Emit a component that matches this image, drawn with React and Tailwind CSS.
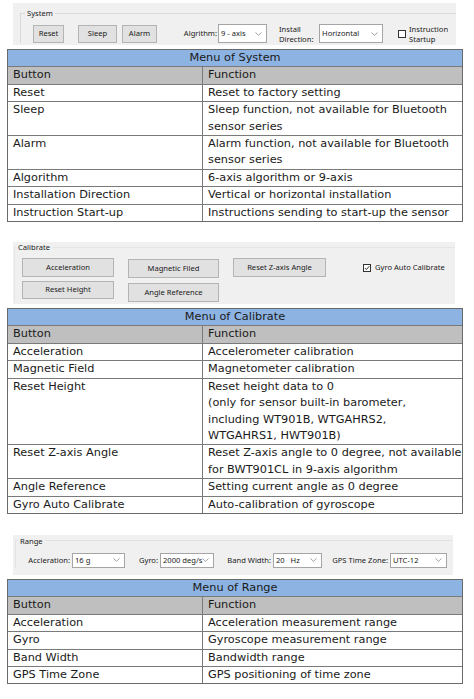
import React from 'react'

const ui = "font-['Noto_Sans','Open_Sans',sans-serif] text-[7.6px] text-[#1a1a1a] whitespace-nowrap"

function WinButton({ children, className }) {
  return (
    <div className={`flex items-center justify-center bg-[#e1e1e1] border border-[#b4b4b4] ${className}`}>
      {children}
    </div>
  )
}

function Chevron() {
  return (
    <svg width="7" height="4" viewBox="0 0 7 4" className="shrink-0">
      <path d="M0.5 0.5 L3.5 3.3 L6.5 0.5" fill="none" stroke="#8a8a8a" strokeWidth="0.8" />
    </svg>
  )
}

function WinSelect({ value, className }) {
  return (
    <div className={`flex items-center justify-between bg-white border border-[#a5a5a5] pl-[2px] pr-[4px] shrink-0 ${className}`}>
      <span className="whitespace-pre">{value}</span>
      <Chevron />
    </div>
  )
}

function CheckBox({ checked }) {
  return (
    <div className="w-[8px] h-[8px] border border-[#333] bg-white flex items-center justify-center shrink-0">
      {checked && (
        <svg width="6" height="6" viewBox="0 0 6 6">
          <path d="M0.8 3 L2.4 4.6 L5.3 1.2" fill="none" stroke="#222" strokeWidth="0.9" />
        </svg>
      )}
    </div>
  )
}

function Label({ children, className }) {
  return <span className={`flex justify-end shrink-0 ${className}`}>{children}</span>
}

function Row({ left, right, header }) {
  const lines = Array.isArray(right) ? right : [right]
  return (
    <div className={`flex border-t border-[#7a7a7a] ${header ? 'bg-[#bfbfbf]' : 'bg-white'}`}>
      <div className="w-[195px] pl-[5px] border-r border-[#7a7a7a] shrink-0">{left}</div>
      <div className="flex-1 pl-[5px] whitespace-nowrap">
        {lines.map((l) => (
          <div key={l}>{l}</div>
        ))}
      </div>
    </div>
  )
}

function MenuTable({ title, rows, className }) {
  return (
    <div className={`ml-[7px] w-[456px] border border-[#6a6a6a] font-['DejaVu_Sans','Verdana',sans-serif] text-[11.3px] leading-[16.4px] text-[#1a1a1a] ${className}`}>
      <div className="bg-[#8db3e2] text-center">{title}</div>
      <Row left="Button" right="Function" header />
      {rows.map(([a, b]) => (
        <Row key={a} left={a} right={b} />
      ))}
    </div>
  )
}

const systemRows = [
  ['Reset', 'Reset to factory setting'],
  ['Sleep', ['Sleep function, not available for Bluetooth', 'sensor series']],
  ['Alarm', ['Alarm function, not available for Bluetooth', 'sensor series']],
  ['Algorithm', '6-axis algorithm or 9-axis'],
  ['Installation Direction', 'Vertical or horizontal installation'],
  ['Instruction Start-up', 'Instructions sending to start-up the sensor'],
]

const calibrateRows = [
  ['Acceleration', 'Accelerometer calibration'],
  ['Magnetic Field', 'Magnetometer calibration'],
  [
    'Reset Height',
    [
      'Reset height data to 0',
      '(only for sensor built-in barometer,',
      'including WT901B, WTGAHRS2,',
      'WTGAHRS1, HWT901B)',
    ],
  ],
  ['Reset Z-axis Angle', ['Reset Z-axis angle to 0 degree, not available', 'for BWT901CL in 9-axis algorithm']],
  ['Angle Reference', 'Setting current angle as 0 degree'],
  ['Gyro Auto Calibrate', 'Auto-calibration of gyroscope'],
]

const rangeRows = [
  ['Acceleration', 'Acceleration measurement range'],
  ['Gyro', 'Gyroscope measurement range'],
  ['Band Width', 'Bandwidth range'],
  ['GPS Time Zone', 'GPS positioning of time zone'],
]

export default function App() {
  return (
    <div className="w-[474px] min-h-[699px] bg-white pt-[3px]">
      {/* System panel */}
      <div className={`ml-[13px] w-[443px] h-[42px] bg-[#f0f0f0] pt-[5px] pl-[7px] overflow-hidden ${ui}`}>
        <fieldset className="border-t border-l border-[#d9d9d9]">
          <legend className="ml-[4px] px-[2px] leading-[10px]">System</legend>
          <div className="flex items-center h-[19px] mt-[6px]">
            <WinButton className="ml-[12px] w-[31px] h-[18px]">Reset</WinButton>
            <WinButton className="ml-[14px] w-[39px] h-[18px]">Sleep</WinButton>
            <WinButton className="ml-[5px] w-[35px] h-[18px]">Alarm</WinButton>
            <Label className="ml-[28px] w-[32px]">Algrithm:</Label>
            <WinSelect value="9 - axis" className="ml-[1px] w-[49px] h-[19px]" />
            <span className="ml-[12px] w-[37px] leading-[10px] shrink-0">
              Install
              <br />
              Direction:
            </span>
            <WinSelect value="Horizontal" className="ml-[3px] w-[64px] h-[19px]" />
            <div className="ml-[15px]">
              <CheckBox />
            </div>
            <span className="ml-[3px] leading-[10px]">
              Instruction
              <br />
              Startup
            </span>
          </div>
        </fieldset>
      </div>

      <MenuTable title="Menu of System" rows={systemRows} className="mt-[4px]" />

      {/* Calibrate panel */}
      <div className={`mt-[20px] ml-[13px] w-[442px] h-[62px] bg-[#f0f0f0] pl-[1px] overflow-hidden ${ui}`}>
        <fieldset className="border-t border-l border-[#e6e6e6]">
          <legend className="ml-[1px] px-[2px] leading-[10px]">Calibrate</legend>
          <div className="flex items-start mt-[6px]">
            <div className="ml-[7px] flex flex-col gap-[4px]">
              <WinButton className="w-[92px] h-[19px]">Acceleration</WinButton>
              <WinButton className="w-[92px] h-[18px]">Reset Height</WinButton>
            </div>
            <div className="ml-[14px] flex flex-col pt-[1px] gap-[5px]">
              <WinButton className="w-[91px] h-[19px]">Magnetic Filed</WinButton>
              <WinButton className="w-[91px] h-[19px]">Angle Reference</WinButton>
            </div>
            <WinButton className="ml-[14px] w-[93px] h-[19px]">Reset Z-axis Angle</WinButton>
            <div className="ml-[37px] mt-[5px] flex items-center gap-[4px]">
              <CheckBox checked />
              <span className="leading-[9px]">Gyro Auto Calibrate</span>
            </div>
          </div>
        </fieldset>
      </div>

      <MenuTable title="Menu of Calibrate" rows={calibrateRows} className="mt-[4px]" />

      {/* Range panel */}
      <div className={`mt-[21px] ml-[13px] w-[440px] h-[40px] bg-[#f0f0f0] pt-[1px] pl-[2px] overflow-hidden ${ui}`}>
        <fieldset className="border-t border-l border-[#e2e2e2]">
          <legend className="ml-[2px] px-[2px] leading-[10px]">Range</legend>
          <div className="flex items-center mt-[7px] h-[15px]">
            <Label className="ml-[13px] w-[41px]">Accleration:</Label>
            <WinSelect value="16 g" className="ml-[2px] w-[53px] h-[15px]" />
            <Label className="ml-[11px] w-[22px]">Gyro:</Label>
            <WinSelect value="2000 deg/s" className="ml-[2px] w-[54px] h-[15px]" />
            <Label className="ml-[12px] w-[45px]">Band Width:</Label>
            <WinSelect value="20   Hz" className="ml-[2px] w-[49px] h-[15px]" />
            <Label className="ml-[8px] w-[58px]">GPS Time Zone:</Label>
            <WinSelect value="UTC-12" className="ml-[2px] w-[57px] h-[15px]" />
          </div>
        </fieldset>
      </div>

      <MenuTable title="Menu of Range" rows={rangeRows} className="mt-[4px]" />
    </div>
  )
}
